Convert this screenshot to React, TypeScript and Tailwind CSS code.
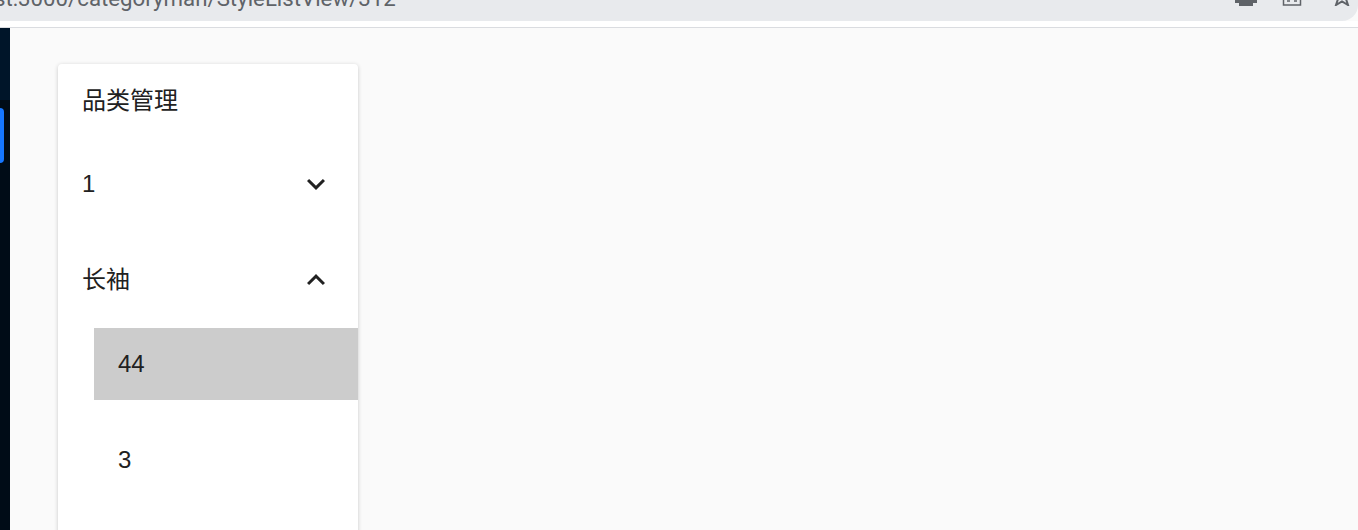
import React from 'react';

const font = { fontFamily: '"Liberation Sans", "Noto Sans CJK SC", sans-serif' };

const ChevronDown = () => (
  <svg viewBox="0 0 24 24" className="w-9 h-9 fill-[#212121]">
    <path d="M16.59 8.59L12 13.17 7.41 8.59 6 10l6 6 6-6z" />
  </svg>
);

const ChevronUp = () => (
  <svg viewBox="0 0 24 24" className="w-9 h-9 fill-[#212121]">
    <path d="M12 8l-6 6 1.41 1.41L12 10.83l4.59 4.58L18 14z" />
  </svg>
);

const BrowserBar = () => (
  <div className="shrink-0">
    <div className="h-[21px] bg-[#e8eaed] rounded-br-[16px] overflow-hidden flex items-start justify-between">
      <div className="text-[22.25px] leading-[24px] text-[#5f6368] whitespace-nowrap -ml-[31px] -mt-[14px] font-['Roboto',sans-serif]">
        host:3000/categoryman/StyleListView/312
      </div>
      <div className="flex items-start pr-[4px]">
        <svg viewBox="0 0 24 24" className="w-6 h-6 -mt-[18px] fill-[#5f6368]">
          <path d="M1 16h22v5H1zM5 21h14v3H5z" />
        </svg>
        <svg viewBox="0 0 24 24" className="w-6 h-6 -mt-[18px] ml-[22px] fill-none stroke-[#5f6368] stroke-[1.5]">
          <path d="M3.500 16v7h17v-7" />
          <path d="M7 19h3M14 19h3" />
        </svg>
        <svg viewBox="0 0 24 24" className="w-6 h-6 -mt-[18px] ml-[26px] fill-none stroke-[#5f6368] stroke-2">
          <path d="M9 14L6 23 12 19.500 18 23 15 14" />
        </svg>
      </div>
    </div>
    <div className="h-[6px] bg-white" />
    <div className="h-px bg-[#dadce0]" />
  </div>
);

const Sidebar = () => (
  <div className="w-[10px] shrink-0 bg-[#000c17]">
    <div className="h-[72px] bg-[#001529]" />
    <div className="mt-[8px] w-[4px] h-[55px] bg-[#1677ff] rounded-r-[6px]" />
  </div>
);

const App = () => {
  return (
    <div className="h-[530px] w-[1358px] overflow-hidden flex flex-col bg-[#fafafa]" style={font}>
      <BrowserBar />
      <div className="flex flex-1 min-h-0">
        <Sidebar />
        <div className="flex-1 pl-[48px] pt-[36px]">
          <div className="w-[300px] h-[600px] bg-white rounded-[4px] shadow-[0_1px_4px_rgba(0,0,0,0.2)] text-[24px] text-[#212121]">
            <div className="h-[72px] pl-[24px] pt-[2px] flex items-center">品类管理</div>
            <div className="h-[72px] mt-[12px] px-[24px] flex items-center justify-between">
              <span>1</span>
              <ChevronDown />
            </div>
            <div className="h-[72px] mt-[24px] px-[24px] flex items-center justify-between">
              <span>长袖</span>
              <ChevronUp />
            </div>
            <div className="ml-[36px] mt-[12px]">
              <div className="h-[72px] pl-[24px] flex items-center bg-[#cccccc]">44</div>
              <div className="h-[72px] mt-[24px] pl-[24px] flex items-center">3</div>
            </div>
          </div>
        </div>
      </div>
    </div>
  );
};

export default App;
